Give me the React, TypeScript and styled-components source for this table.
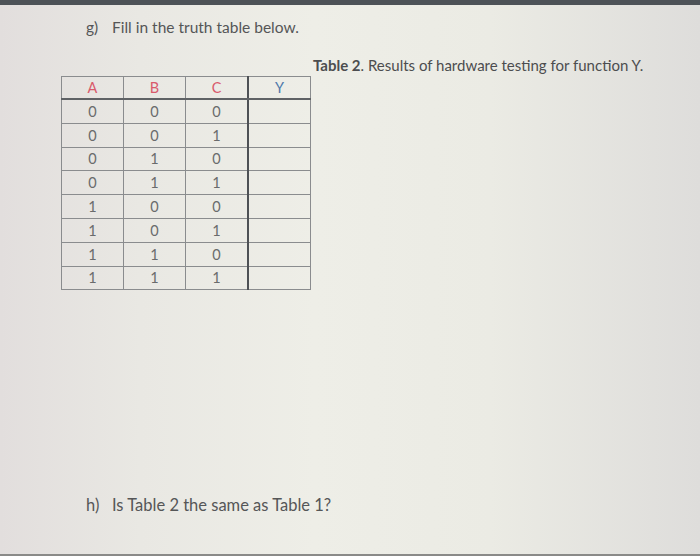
import React from 'react'
import styled, { createGlobalStyle } from 'styled-components'

const GlobalStyle = createGlobalStyle`
  html, body {
    margin: 0;
    padding: 0;
  }
  body {
    font-family: Lato, "Open Sans", sans-serif;
  }
`

const Screen = styled.div`
  width: 700px;
  height: 556px;
  display: flex;
  flex-direction: column;
  overflow: hidden;
  background: linear-gradient(90deg, #e2dedd 0%, #e9e8e3 20%, #eeeee7 45%, #ebebe4 70%, #dedddb 100%);
`

const TopBar = styled.div`
  height: 5px;
  background: #4d5257;
`

const BottomBar = styled.div`
  height: 2px;
  background: #8a8a88;
`

const Page = styled.div`
  flex: 1;
  display: flex;
  flex-direction: column;
  padding: 13px 0 0 86px;
  color: #555657;
`

const Question = styled.div<{ mt?: number; size?: number }>`
  display: flex;
  gap: 12px;
  font-size: ${({ size }) => size || 15.5}px;
  margin-top: ${({ mt }) => mt || 0}px;
`

const Label = styled.span`
  width: 14px;
`

const TableArea = styled.div`
  display: flex;
  align-items: flex-start;
  gap: 2px;
  margin: 18px 0 0 -25px;
`

const Caption = styled.div`
  font-size: 15px;
  color: #4c4d4f;
  margin-top: 2px;
  b {
    font-weight: 700;
  }
`

const Grid = styled.table`
  border-collapse: collapse;
  margin-top: 22px;
  font-size: 14.5px;
`

const Cell = styled.td<{ head?: boolean; color?: string; split?: boolean }>`
  width: 61px;
  height: ${({ head }) => (head ? 21 : 22.8)}px;
  padding: 0;
  text-align: center;
  color: ${({ color }) => color || '#6a6b6c'};
  border: 1px solid #8a8c8e;
  border-bottom: ${({ head }) => (head ? '2px solid #5f6265' : '1px solid #8a8c8e')};
  border-right: ${({ split }) => (split ? '2px solid #4e5155' : '1px solid #8a8c8e')};
`

const rows = [
  [0, 0, 0],
  [0, 0, 1],
  [0, 1, 0],
  [0, 1, 1],
  [1, 0, 0],
  [1, 0, 1],
  [1, 1, 0],
  [1, 1, 1],
]

const red = '#d95a6c'
const blue = '#4f79ab'

const App = () => (
  <Screen>
    <GlobalStyle />
    <TopBar />
    <Page>
      <Question>
        <Label>g)</Label>
        <span>Fill in the truth table below.</span>
      </Question>
      <TableArea>
        <Grid>
          <tbody>
            <tr>
              <Cell head color={red}>A</Cell>
              <Cell head color={red}>B</Cell>
              <Cell head color={red} split>C</Cell>
              <Cell head color={blue}>Y</Cell>
            </tr>
            {rows.map((r, i) => (
              <tr key={i}>
                <Cell>{r[0]}</Cell>
                <Cell>{r[1]}</Cell>
                <Cell split>{r[2]}</Cell>
                <Cell />
              </tr>
            ))}
          </tbody>
        </Grid>
        <Caption>
          <b>Table 2</b>. Results of hardware testing for function Y.
        </Caption>
      </TableArea>
      <Question mt={205} size={16.5}>
        <Label>h)</Label>
        <span>Is Table 2 the same as Table 1?</span>
      </Question>
    </Page>
    <BottomBar />
  </Screen>
)

export default App
